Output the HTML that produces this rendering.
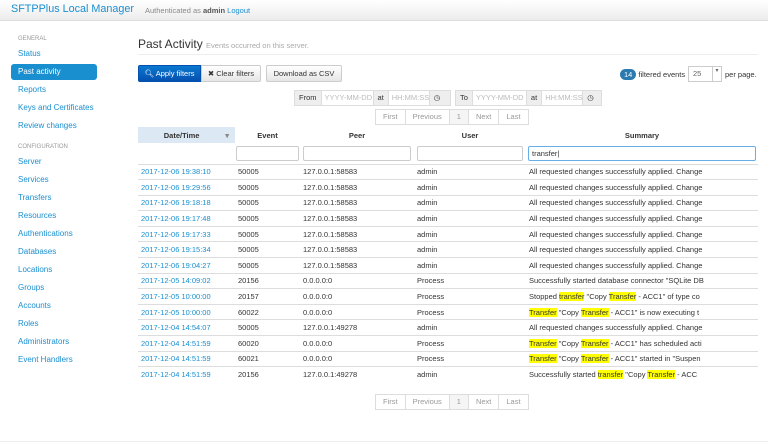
<!DOCTYPE html>
<html><head><meta charset="utf-8"><style>
*{box-sizing:border-box;margin:0;padding:0}
body{width:768px;height:444px;overflow:hidden;background:#fff;font-family:"Liberation Sans",sans-serif;font-size:8px;color:#333;position:relative;white-space:nowrap}
.hdr{position:absolute;left:0;top:0;width:768px;height:21px;background:linear-gradient(#fff,#ececec);border-bottom:1px solid #ddd}
.brand{position:absolute;left:11px;top:3px;font-size:10.8px;color:#1a8fd0}
.auth{position:absolute;left:145px;top:6px;font-size:7.5px;color:#888}
.auth b{color:#555}.auth a{color:#1a8fd0}
.side{position:absolute;left:11px;top:33px;width:86px}
.side .h{font-size:6px;color:#999;padding-left:7px;height:12px;line-height:12px}
.side .i{color:#1a8fd0;height:18px;line-height:18px;padding-left:7px;font-size:8px}
.side .a{background:#1a8fd0;color:#fff;border-radius:3px;height:16px;line-height:16px;margin:1px 0}
a{color:#1a8fd0}
.ttl{position:absolute;left:138px;top:37px;font-size:12px;color:#333}
.ttl small{font-size:7.5px;color:#aaa}
.hr{position:absolute;left:138px;top:54px;width:620px;border-top:1px solid #eee}
.btn{position:absolute;top:65px;height:17px;line-height:15px;border:1px solid #ccc;background:linear-gradient(#fff,#e6e6e6);font-size:7.5px;text-align:center;border-radius:2px;color:#333}
.pill{position:absolute;border:1px solid #ddd;height:16px;line-height:14px;color:#999;font-size:7.5px;background:#fff;display:flex}
.pill span{display:block;padding:0 5px;border-right:1px solid #ddd}
.pg span{padding:0 7px}
table{position:absolute;left:138px;top:127px;width:620px;border-collapse:collapse}
th{height:16px;font-size:7.5px;text-align:center;color:#333}
td{height:15.6px;border-top:1px solid #ddd;font-size:7.5px;padding-left:3px;white-space:nowrap;overflow:hidden}
td.d{color:#1a8fd0}
.in{border:1px solid #ccc;height:15px;border-radius:2px;background:#fff}
mark{background:#ff0;color:#333}
</style></head><body>
<div class="hdr"><div class="brand">SFTPPlus Local Manager</div><div class="auth">Authenticated as <b>admin</b> <a>Logout</a></div></div>
<div class="side">
<div class="h">GENERAL</div>
<div class="i">Status</div><div class="i a">Past activity</div><div class="i">Reports</div><div class="i">Keys and Certificates</div><div class="i">Review changes</div>
<div class="h" style="margin-top:6px">CONFIGURATION</div>
<div class="i">Server</div><div class="i">Services</div><div class="i">Transfers</div><div class="i">Resources</div><div class="i">Authentications</div><div class="i">Databases</div><div class="i">Locations</div><div class="i">Groups</div><div class="i">Accounts</div><div class="i">Roles</div><div class="i">Administrators</div><div class="i">Event Handlers</div>
</div>
<div class="ttl">Past Activity <small>Events occurred on this server.</small></div>
<div class="hr"></div>
<div class="btn" style="left:138px;width:63px;background:linear-gradient(#0a78d0,#0450b0);color:#fff;border-color:#0450b0;border-radius:2px 0 0 2px">&#x1F50D;&#xFE0E; Apply filters</div>
<div class="btn" style="left:201px;width:60px;border-radius:0 2px 2px 0">✖ Clear filters</div>
<div class="btn" style="left:266px;width:76px">Download as CSV</div>
<div style="position:absolute;left:620px;top:70px;font-size:7.5px"><span style="background:#2a7ab0;color:#fff;border-radius:6px;padding:1px 4px">14</span> filtered events</div>
<div style="position:absolute;left:688px;top:66px;width:34px;height:16px;border:1px solid #ccc;font-size:7.5px;padding:2px 4px;color:#666">25<span style="position:absolute;right:0;top:0;width:9px;height:14px;border-left:1px solid #ccc;font-size:6px;text-align:center">▾</span></div>
<div style="position:absolute;left:725px;top:70px;font-size:7.5px">per page.</div>
<div class="pill" style="left:294px;top:90px;width:157px;background:#eee;color:#333;overflow:hidden"><span style="padding:0 4px">From</span><span style="background:#fff;color:#bbb;width:52px;padding:0 3px">YYYY-MM-DD</span><span style="padding:0 4px">at</span><span style="background:#fff;color:#bbb;width:41px;padding:0 3px">HH:MM:SS</span><span style="border:0;padding:0 4px">◷</span></div>
<div class="pill" style="left:455px;top:90px;width:147px;background:#eee;color:#333;overflow:hidden"><span style="padding:0 4px">To</span><span style="background:#fff;color:#bbb;width:54px;padding:0 3px">YYYY-MM-DD</span><span style="padding:0 4px">at</span><span style="background:#fff;color:#bbb;width:41px;padding:0 3px">HH:MM:SS</span><span style="border:0;padding:0 4px">◷</span></div>
<div class="pill pg" style="left:375px;top:109px"><span>First</span><span>Previous</span><span style="background:#f5f5f5">1</span><span>Next</span><span style="border:0">Last</span></div>
<table>
<tr><th style="width:97px;background:#dce9f5">Date/Time <span style="float:right;margin-right:6px;color:#888">▾</span></th><th style="width:65px">Event</th><th style="width:114px">Peer</th><th style="width:112px">User</th><th>Summary</th></tr>
<tr style="height:21px"><td style="border:0"></td><td style="border:0;padding:1px"><div class="in"></div></td><td style="border:0;padding:1px 3px"><div class="in"></div></td><td style="border:0;padding:1px 3px"><div class="in"></div></td><td style="border:0;padding:1px 2px"><div class="in" style="border-color:#66afe9;padding:2px 3px">transfer|</div></td></tr>
<tr><td class="d">2017-12-06 19:38:10</td><td>50005</td><td>127.0.0.1:58583</td><td>admin</td><td>All requested changes successfully applied. Change</td></tr>
<tr><td class="d">2017-12-06 19:29:56</td><td>50005</td><td>127.0.0.1:58583</td><td>admin</td><td>All requested changes successfully applied. Change</td></tr>
<tr><td class="d">2017-12-06 19:18:18</td><td>50005</td><td>127.0.0.1:58583</td><td>admin</td><td>All requested changes successfully applied. Change</td></tr>
<tr><td class="d">2017-12-06 19:17:48</td><td>50005</td><td>127.0.0.1:58583</td><td>admin</td><td>All requested changes successfully applied. Change</td></tr>
<tr><td class="d">2017-12-06 19:17:33</td><td>50005</td><td>127.0.0.1:58583</td><td>admin</td><td>All requested changes successfully applied. Change</td></tr>
<tr><td class="d">2017-12-06 19:15:34</td><td>50005</td><td>127.0.0.1:58583</td><td>admin</td><td>All requested changes successfully applied. Change</td></tr>
<tr><td class="d">2017-12-06 19:04:27</td><td>50005</td><td>127.0.0.1:58583</td><td>admin</td><td>All requested changes successfully applied. Change</td></tr>
<tr><td class="d">2017-12-05 14:09:02</td><td>20156</td><td>0.0.0.0:0</td><td>Process</td><td>Successfully started database connector "SQLite DB</td></tr>
<tr><td class="d">2017-12-05 10:00:00</td><td>20157</td><td>0.0.0.0:0</td><td>Process</td><td>Stopped <mark>transfer</mark> "Copy <mark>Transfer</mark> - ACC1" of type co</td></tr>
<tr><td class="d">2017-12-05 10:00:00</td><td>60022</td><td>0.0.0.0:0</td><td>Process</td><td><mark>Transfer</mark> "Copy <mark>Transfer</mark> - ACC1" is now executing t</td></tr>
<tr><td class="d">2017-12-04 14:54:07</td><td>50005</td><td>127.0.0.1:49278</td><td>admin</td><td>All requested changes successfully applied. Change</td></tr>
<tr><td class="d">2017-12-04 14:51:59</td><td>60020</td><td>0.0.0.0:0</td><td>Process</td><td><mark>Transfer</mark> "Copy <mark>Transfer</mark> - ACC1" has scheduled acti</td></tr>
<tr><td class="d">2017-12-04 14:51:59</td><td>60021</td><td>0.0.0.0:0</td><td>Process</td><td><mark>Transfer</mark> "Copy <mark>Transfer</mark> - ACC1" started in "Suspen</td></tr>
<tr><td class="d">2017-12-04 14:51:59</td><td>20156</td><td>127.0.0.1:49278</td><td>admin</td><td>Successfully started <mark>transfer</mark> "Copy <mark>Transfer</mark> - ACC</td></tr>
</table>
<div class="pill pg" style="left:375px;top:394px"><span>First</span><span>Previous</span><span style="background:#f5f5f5">1</span><span>Next</span><span style="border:0">Last</span></div>
<div style="position:absolute;left:0;top:441px;width:768px;border-top:1px solid #eee"></div>
</body></html>
